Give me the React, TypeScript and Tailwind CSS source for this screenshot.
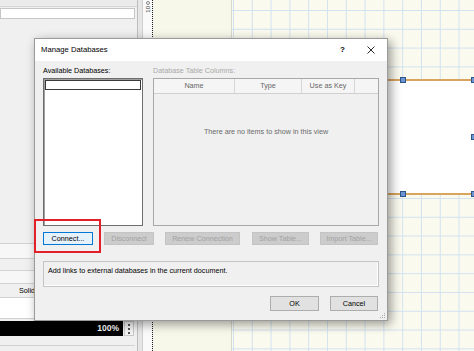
import React from "react";

// Manage Databases dialog over a diagram editor (Visio-like) window.

function LeftPanel() {
  return (
    <div className="flex h-full w-[137px] shrink-0 flex-col bg-[#f0f0f0]">
      <div className="h-[7px] border-b border-[#d6d6d6] bg-[#ebebeb]" />
      <div className="mt-[1px] mr-[2px] h-[11px] border border-[#c6c6c6] bg-white" />
      <div className="flex-1" />
      <div className="h-px bg-[#d2d2d2]" />
      <div className="h-[14px] bg-[#f7f7f7]" />
      <div className="h-px bg-[#d2d2d2]" />
      <div className="h-[11px]" />
      <div className="h-px bg-[#d2d2d2]" />
      <div className="h-[12px] bg-[#f7f7f7]" />
      <div className="h-px bg-[#d2d2d2]" />
      <div className="flex h-[13px] items-center pl-[19px] text-[7.2px]">Solid</div>
      <div className="h-px bg-[#d2d2d2]" />
      <div className="h-[20px] bg-white" />
      <div className="h-px bg-[#d2d2d2]" />
      <div className="h-[2px]" />
      <div className="flex h-[15px]">
        <div className="flex w-[123px] items-center justify-end bg-black pr-[4px] text-[8.5px] font-bold text-white">
          100%
        </div>
        <div className="ml-[1px] flex w-[10px] flex-col items-center justify-center gap-[2px] border border-[#c8c8c8] bg-[#f4f4f4]">
          <div className="h-[2px] w-[2px] bg-[#555]" />
          <div className="h-[2px] w-[2px] bg-[#555]" />
          <div className="h-[2px] w-[2px] bg-[#555]" />
        </div>
      </div>
      <div className="h-[9px]" />
      <div className="mr-[2px] h-px bg-[#d2d2d2]" />
      <div className="h-[5px] flex-none" />
    </div>
  );
}

function Ruler() {
  return (
    <div className="flex h-full shrink-0">
      <div className="w-px bg-[#bdbdbd]" />
      <div className="w-[4px] bg-[#e6e6e6]" />
      <div className="flex w-[10px] flex-col items-center border-l border-[#cfcfcf] bg-[#fafafa] pt-[1px]">
        <div className="h-[4px] w-[4px] rounded-full border border-[#888]" />
        <div className="mt-[1px] rotate-180 text-[6px] leading-none text-[#333] [writing-mode:vertical-rl]">10</div>
      </div>
      <div className="w-px border-l border-dotted border-[#222]" />
    </div>
  );
}

function Handle({ className }: { className: string }) {
  return (
    <div className={`absolute h-[6px] w-[6px] border border-[#2f5587] bg-[#6b95d4] ${className}`} />
  );
}

function Canvas() {
  return (
    <div className="flex h-full flex-1">
      <div className="w-[78px] bg-[#f7f7ea]" />
      <div className="relative flex-1 overflow-hidden border-l border-[#d8d8cc] bg-[#fafaef] bg-[linear-gradient(to_right,#d3e2f0_1px,transparent_1px),linear-gradient(to_bottom,#d3e2f0_1px,transparent_1px)] bg-size-[18.8px_18.8px] bg-position-[1px_10px]">
        {/* shape */}
        <div className="absolute left-[148px] top-[79px] h-[116px] w-[120px] border-y-2 border-[#d8a45e] bg-white" />
        <Handle className="left-[168px] top-[77px]" />
        <Handle className="left-[239px] top-[77px]" />
        <Handle className="left-[239px] top-[134px]" />
        <Handle className="left-[168px] top-[191px]" />
        <Handle className="left-[239px] top-[191px]" />
      </div>
    </div>
  );
}

function WinButton({
  label,
  w,
  variant = "disabled",
  className = "",
}: {
  label: string;
  w: string;
  variant?: "default" | "disabled" | "focus";
  className?: string;
}) {
  const look =
    variant === "focus"
      ? "border-[#0078d7] bg-[#e5f1fb] text-black"
      : variant === "default"
      ? "border-[#adadad] bg-[#e1e1e1] text-black"
      : "border-[#c4c4c4] bg-[#cccccc] text-[#a2a2a2]";
  return (
    <div className={`flex h-full items-center justify-center border ${look} ${w} ${className}`}>
      {label}
    </div>
  );
}

function Dialog() {
  return (
    <div className="absolute left-[34px] top-[38px] w-[354px] border border-[#9a9a9a] bg-[#f0f0f0] shadow-[3px_3px_10px_rgba(0,0,0,0.4)]">
      {/* title bar */}
      <div className="flex h-[22px] items-center bg-white pl-[6px]">
        <span className="text-[7.7px]">Manage Databases</span>
        <span className="ml-auto text-[8px] font-bold">?</span>
        <svg width="8" height="8" viewBox="0 0 8 8" className="ml-[22px] mr-[12px]">
          <path d="M0.5 0.5 L7.5 7.5 M7.5 0.5 L0.5 7.5" stroke="#111" strokeWidth="0.9" />
        </svg>
      </div>

      <div className="flex flex-col px-[8px] pt-[5px] pb-[9px]">
        <div className="flex h-[9px] items-center">
          <span className="w-[110px]">Available Databases:</span>
          <span className="text-[#a9a9a9]">Database Table Columns:</span>
        </div>

        <div className="mt-[3px] flex h-[148px]">
          <div className="w-[100px] border border-[#6e6e6e] bg-white p-[1px] shadow-[inset_1px_1px_0_#a0a0a0]">
            <div className="h-[10px] border border-[#3a3a3a] bg-white" />
          </div>
          <div className="ml-[10px] flex w-[226px] flex-col border border-[#a8a8a8] bg-[#f0f0f0]">
            <div className="flex h-[15px] border-b border-[#d0d0d0] bg-[#f5f5f5] text-[#666]">
              <div className="flex w-[81px] items-center justify-center border-r border-[#d6d6d6]">Name</div>
              <div className="flex w-[67px] items-center justify-center border-r border-[#d6d6d6]">Type</div>
              <div className="flex w-[53px] items-center justify-center border-r border-[#d6d6d6]">Use as Key</div>
              <div className="flex-1" />
            </div>
            <div className="pt-[34px] text-center text-[#6a6a6a]">There are no items to show in this view</div>
          </div>
        </div>

        <div className="mt-[6px] flex h-[13px]">
          <WinButton label="Connect..." w="w-[50px]" variant="focus" />
          <WinButton label="Disconnect" w="w-[50px]" className="ml-[11px]" />
          <WinButton label="Renew Connection" w="w-[75px]" className="ml-[11px]" />
          <WinButton label="Show Table..." w="w-[57px]" className="ml-[12px]" />
          <WinButton label="Import Table..." w="w-[58px]" className="ml-[11px]" />
        </div>

        <div className="mt-[16px] h-[26px] w-[336px] border border-[#c4c4c4] px-[4px] pt-[5px] shadow-[inset_-1px_-1px_0_#fff]">
          Add links to external databases in the current document.
        </div>

        <div className="mt-[9px] flex h-[15px] justify-end pr-[1px]">
          <WinButton label="OK" w="w-[49px]" variant="default" />
          <WinButton label="Cancel" w="w-[48px]" variant="default" className="ml-[11px]" />
        </div>
      </div>

      {/* resize grip */}
      <svg width="7" height="7" viewBox="0 0 7 7" className="absolute bottom-[1px] right-[1px]">
        <rect x="5" y="1" width="1" height="1" fill="#a8a8a8" />
        <rect x="3" y="3" width="1" height="1" fill="#a8a8a8" />
        <rect x="5" y="3" width="1" height="1" fill="#a8a8a8" />
        <rect x="1" y="5" width="1" height="1" fill="#a8a8a8" />
        <rect x="3" y="5" width="1" height="1" fill="#a8a8a8" />
        <rect x="5" y="5" width="1" height="1" fill="#a8a8a8" />
      </svg>
    </div>
  );
}

export default function App() {
  return (
    <div className="relative h-[351px] w-[474px] overflow-hidden bg-[#f0f0f0] font-['Liberation_Sans',Arial,sans-serif] text-[7.2px] leading-none text-black">
      <div className="flex h-full">
        <LeftPanel />
        <Ruler />
        <Canvas />
      </div>
      <Dialog />
      {/* red callout around Connect */}
      <div className="absolute left-[34px] top-[219px] h-[34px] w-[67px] border-2 border-[#e3202a]" />
    </div>
  );
}
